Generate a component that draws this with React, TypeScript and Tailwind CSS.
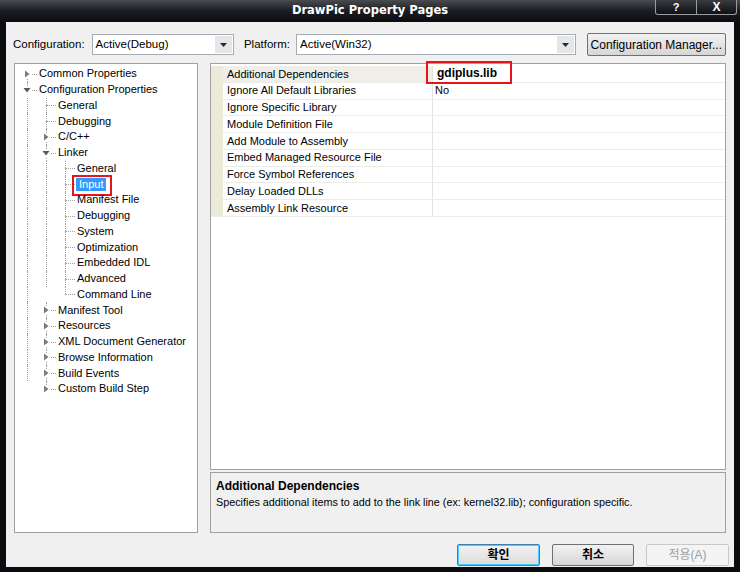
import React from 'react';

type Node = { label: string; level: number; exp?: 'open' | 'closed'; selected?: boolean };

const tree: Node[] = [
  { label: 'Common Properties', level: 0, exp: 'closed' },
  { label: 'Configuration Properties', level: 0, exp: 'open' },
  { label: 'General', level: 1 },
  { label: 'Debugging', level: 1 },
  { label: 'C/C++', level: 1, exp: 'closed' },
  { label: 'Linker', level: 1, exp: 'open' },
  { label: 'General', level: 2 },
  { label: 'Input', level: 2, selected: true },
  { label: 'Manifest File', level: 2 },
  { label: 'Debugging', level: 2 },
  { label: 'System', level: 2 },
  { label: 'Optimization', level: 2 },
  { label: 'Embedded IDL', level: 2 },
  { label: 'Advanced', level: 2 },
  { label: 'Command Line', level: 2 },
  { label: 'Manifest Tool', level: 1, exp: 'closed' },
  { label: 'Resources', level: 1, exp: 'closed' },
  { label: 'XML Document Generator', level: 1, exp: 'closed' },
  { label: 'Browse Information', level: 1, exp: 'closed' },
  { label: 'Build Events', level: 1, exp: 'closed' },
  { label: 'Custom Build Step', level: 1, exp: 'closed' },
];

const props: [string, string][] = [
  ['Additional Dependencies', 'gdiplus.lib'],
  ['Ignore All Default Libraries', 'No'],
  ['Ignore Specific Library', ''],
  ['Module Definition File', ''],
  ['Add Module to Assembly', ''],
  ['Embed Managed Resource File', ''],
  ['Force Symbol References', ''],
  ['Delay Loaded DLLs', ''],
  ['Assembly Link Resource', ''],
];

// is there a later row at `level` before the tree climbs above it
function hasLater(i: number, level: number) {
  for (let j = i + 1; j < tree.length; j++) {
    if (tree[j].level < level) return false;
    if (tree[j].level === level) return true;
  }
  return false;
}

function Expander({ kind }: { kind: 'open' | 'closed' }) {
  return (
    <svg width="8" height="8" viewBox="0 0 8 8" className="absolute left-[5px] top-1/2 -translate-y-1/2 bg-white">
      {kind === 'closed' ? (
        <path d="M2 0.5 L6.5 4 L2 7.5 Z" fill="#7a7a7a" />
      ) : (
        <path d="M0.5 2 L7.5 2 L4 6.5 Z" fill="#5a5a5a" />
      )}
    </svg>
  );
}

function TreeRow({ n, i }: { n: Node; i: number }) {
  const cols = [];
  for (let c = 0; c < n.level; c++) {
    cols.push(
      <div key={c} className="relative w-[19px] shrink-0">
        {hasLater(i, c + 1) && (
          <div className="absolute bottom-0 left-[9px] top-0 border-l border-dotted border-[#a0a0a0]" />
        )}
      </div>
    );
  }
  return (
    <div className="flex h-[15.75px]">
      {cols}
      <div className="relative w-[19px] shrink-0">
        {i > 0 && <div className="absolute left-[9px] top-0 h-1/2 border-l border-dotted border-[#a0a0a0]" />}
        {hasLater(i, n.level) && (
          <div className="absolute bottom-0 left-[9px] top-1/2 border-l border-dotted border-[#a0a0a0]" />
        )}
        <div className="absolute left-[9px] right-0 top-1/2 border-t border-dotted border-[#a0a0a0]" />
        {n.exp && <Expander kind={n.exp} />}
      </div>
      <div className="ml-[1px] flex items-center">
        <span
          className={`relative whitespace-nowrap text-[11px] leading-[13px] ${
            n.selected ? 'bg-[#3399ff] px-[3px] text-white' : 'px-[1px]'
          }`}
        >
          {n.label}
          {n.selected && (
            <span className="absolute -bottom-[5px] -left-[4px] -right-[6px] -top-[3px] border-2 border-[#e8141c]" />
          )}
        </span>
      </div>
    </div>
  );
}

function Select({ value, className }: { value: string; className: string }) {
  return (
    <div className={`flex h-[21px] items-center border border-[#a5acb5] bg-white ${className}`}>
      <span className="flex-1 pl-[3px] text-[11.5px] text-black">{value}</span>
      <div className="mr-[1px] flex h-[17px] w-[17px] items-center justify-center bg-[#e6e6e6]">
        <svg width="7" height="4" viewBox="0 0 7 4">
          <path d="M0 0 L7 0 L3.5 4 Z" fill="#1a2a4a" />
        </svg>
      </div>
    </div>
  );
}

function Btn({ label, primary, disabled, className }: { label: string; primary?: boolean; disabled?: boolean; className?: string }) {
  return (
    <div
      className={`flex h-[22px] items-center justify-center whitespace-nowrap rounded-[2px] border text-[12px] ${
        disabled
          ? 'border-[#c8c8c8] bg-[#f4f4f4] text-[#a0a0a0]'
          : primary
            ? 'border-[#3c7fb1] bg-gradient-to-b from-[#f2f2f2] to-[#dcdcdc] text-black shadow-[inset_0_0_0_1px_#48d1ff]'
            : 'border-[#707070] bg-gradient-to-b from-[#f2f2f2] to-[#d6d6d6] text-black'
      } ${className ?? ''}`}
    >
      {label}
    </div>
  );
}

export default function App() {
  return (
    <div
      className="flex h-[572px] w-[740px] flex-col bg-[#0b0c10] text-black"
      style={{ fontFamily: '"Liberation Sans", "Noto Sans CJK KR", sans-serif' }}
    >
      {/* title bar */}
      <div className="relative flex h-[22px] shrink-0 items-center justify-center bg-gradient-to-b from-[#4a4c52] via-[#1c1d22] to-[#0b0c10]">
        <span className="text-[11.5px] font-bold text-white" style={{ fontFamily: '"DejaVu Sans", sans-serif' }}>
          DrawPic Property Pages
        </span>
        <div className="absolute right-[3px] top-0 flex">
          <div className="flex h-[15px] w-[42px] items-center justify-center rounded-bl-[3px] border border-t-0 border-[#9a9ca0] bg-gradient-to-b from-[#3a3b40] to-[#101115] text-[11px] font-bold text-white">
            ?
          </div>
          <div className="flex h-[15px] w-[40px] items-center justify-center rounded-br-[3px] border border-l-0 border-t-0 border-[#9a9ca0] bg-gradient-to-b from-[#3a3b40] to-[#101115] text-[12px] font-bold text-white">
            X
          </div>
        </div>
      </div>

      {/* body */}
      <div className="mx-[6px] flex h-[545px] flex-col bg-[#f0f0f0]">
        {/* config row */}
        <div className="flex h-[41px] items-center pl-[7px] pr-[8px] pt-[4px]">
          <span className="text-[11.5px]">Configuration:</span>
          <Select value="Active(Debug)" className="ml-[7px] w-[143px]" />
          <span className="ml-[10px] text-[11.5px]">Platform:</span>
          <Select value="Active(Win32)" className="ml-[6px] w-[281px]" />
          <Btn label="Configuration Manager..." className="ml-[11px] h-[23px] w-[140px] text-[11.5px]" />
        </div>

        <div className="flex h-[470px] gap-[12px] pl-[8px] pr-[8px]">
          {/* tree */}
          <div className="h-[470px] w-[184px] border border-[#a0a0a0] bg-white pl-[3px] pt-[2px]">
            {tree.map((n, i) => (
              <TreeRow key={i} n={n} i={i} />
            ))}
          </div>

          {/* right */}
          <div className="flex flex-1 flex-col">
            <div className="h-[407px] border border-[#a0a0a0] bg-white pt-[2px]">
              {props.map(([name, val], i) => (
                <div key={i} className="flex h-[16.75px] border-b border-[#ecebe6]">
                  <div className="w-[12px] bg-[#ecead8]" />
                  <div
                    className={`flex w-[210px] items-center whitespace-nowrap border-r border-[#e4e3dc] pl-[4px] text-[11px] ${
                      i === 0 ? 'bg-[#efeee8]' : ''
                    }`}
                  >
                    {name}
                  </div>
                  <div className="relative flex flex-1 items-center pl-[2px] text-[11px]">
                    {i === 0 ? (
                      <span className="absolute left-[-7px] top-[-5px] flex h-[23px] w-[86px] items-center border-2 border-[#e8141c] pl-[9px] text-[12px] font-bold">
                        {val}
                      </span>
                    ) : (
                      val
                    )}
                  </div>
                </div>
              ))}
            </div>
            <div className="h-[2px]" />
            <div className="h-[61px] border border-[#a0a0a0] bg-[#f0f0f0] pl-[5px] pt-[5px]">
              <div className="text-[12px] font-bold leading-[16px]">Additional Dependencies</div>
              <div className="whitespace-nowrap text-[10.8px] leading-[16px]">
                Specifies additional items to add to the link line (ex: kernel32.lib); configuration specific.
              </div>
            </div>
          </div>
        </div>

        {/* buttons */}
        <div className="flex flex-1 items-center justify-end gap-[12px] pr-[5px] pt-[9px]">
          <Btn label="확인" primary className="w-[83px] font-bold" />
          <Btn label="취소" className="w-[82px] font-bold" />
          <Btn label="적용(A)" disabled className="w-[83px]" />
        </div>
      </div>
      <div className="flex-1" />
    </div>
  );
}
